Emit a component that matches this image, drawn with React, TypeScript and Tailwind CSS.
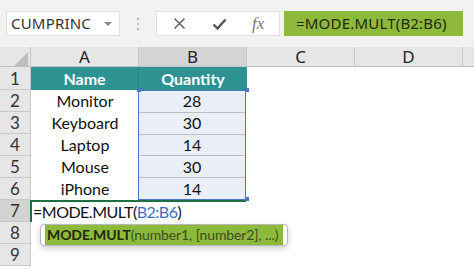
import React from "react";

const ROWS = [
  { n: 2, name: "Monitor", q: "28" },
  { n: 3, name: "Keyboard", q: "30" },
  { n: 4, name: "Laptop", q: "14" },
  { n: 5, name: "Mouse", q: "30" },
  { n: 6, name: "iPhone", q: "14" },
];

const cellFont = { fontFamily: "Lato, 'Noto Sans', sans-serif" } as React.CSSProperties;

function RowHead({ n, active }: { n: number; active?: boolean }) {
  return (
    <div
      className={`w-[31px] shrink-0 h-full flex items-center justify-center border-r border-b border-[#c8c8c8] text-[17px] leading-none text-[#333] ${
        active ? "bg-[#d2d2d2]" : "bg-[#e6e6e6]"
      }`}
      style={cellFont}
    >
      {n}
    </div>
  );
}

export default function App() {
  return (
    <div className="w-[474px] h-[269px] overflow-hidden bg-white relative" style={{ fontFamily: "'Noto Sans', 'Open Sans', sans-serif" }}>
      {/* top bar */}
      <div className="h-[47px] bg-[#f2f2f2] flex items-start pt-[11px]">
        <div className="ml-[6px] w-[114px] h-[25px] bg-white border border-[#e0e0e0] flex items-center pl-[4px] pr-[6px]">
          <span className="text-[15px] text-[#333] leading-none tracking-[0.2px]">CUMPRINC</span>
          <svg className="ml-auto" width="10" height="6" viewBox="0 0 10 6">
            <path d="M1 1 L5 5 L9 1 Z" fill="#8a8a8a" />
          </svg>
        </div>
        <div className="w-[36px] h-[25px] flex flex-col items-center justify-center gap-[3px]">
          <div className="w-[2px] h-[2px] bg-[#a8a8a8] rounded-full" />
          <div className="w-[2px] h-[2px] bg-[#a8a8a8] rounded-full" />
          <div className="w-[2px] h-[2px] bg-[#a8a8a8] rounded-full" />
        </div>
        <div className="w-[124px] h-[25px] bg-white border border-[#e0e0e0] flex items-center">
          <svg className="ml-[16px]" width="13" height="13" viewBox="0 0 13 13">
            <path d="M1.5 1.5 L11.5 11.5 M11.5 1.5 L1.5 11.5" stroke="#666" strokeWidth="1.6" />
          </svg>
          <svg className="ml-[26px]" width="15" height="12" viewBox="0 0 15 12">
            <path d="M1.5 6.5 L5.5 10.5 L13.5 1.5" stroke="#555" strokeWidth="2.4" fill="none" />
          </svg>
          <span
            className="ml-[25px] text-[17px] italic text-[#777] leading-none"
            style={{ fontFamily: "'Liberation Serif', serif" }}
          >
            fx
          </span>
        </div>
        <div className="ml-[4px] w-[179px] h-[25px] bg-[#8dba3a] flex items-center pl-[12px]">
          <span className="text-[15px] text-[#1e2a10] leading-none tracking-[0.2px]">=MODE.MULT(B2:B6)</span>
        </div>
      </div>

      {/* column header row */}
      <div className="h-[20px] flex bg-[#e6e6e6] border-b border-[#c0c0c0]">
        <div className="w-[31px] shrink-0 relative border-r border-[#c8c8c8]">
          <svg className="absolute left-[14px] top-[5px]" width="14" height="14" viewBox="0 0 14 14">
            <path d="M14 0 L14 14 L0 14 Z" fill="#bdbdbd" />
          </svg>
        </div>
        {["A", "B", "C", "D"].map((c) => (
          <div
            key={c}
            className={`w-[108px] shrink-0 flex items-center justify-center border-r border-[#c8c8c8] text-[17px] leading-none text-[#222] ${
              c === "B" ? "bg-[#d4d4d4]" : ""
            }`}
            style={{ fontFamily: "'Noto Sans', sans-serif" }}
          >
            {c}
          </div>
        ))}
        <div className="flex-1" />
      </div>

      {/* row 1 */}
      <div className="h-[23px] flex">
        <RowHead n={1} />
        <div
          className="w-[108px] shrink-0 bg-[#2f9292] flex items-center justify-center text-white font-bold text-[16px] leading-none border-r border-[#2a8080]"
          style={cellFont}
        >
          Name
        </div>
        <div
          className="w-[108px] shrink-0 bg-[#2f9292] flex items-center justify-center text-white font-bold text-[16px] leading-none"
          style={cellFont}
        >
          Quantity
        </div>
        <div className="flex-1" />
      </div>

      {/* data rows with B range highlight */}
      <div className="flex relative">
        <div className="flex flex-col">
          {ROWS.map((r) => (
            <div key={r.n} className="h-[22px] flex">
              <RowHead n={r.n} />
              <div className="w-[108px] shrink-0 flex items-center justify-center text-[16px] leading-none text-[#111]" style={cellFont}>
                {r.name}
              </div>
            </div>
          ))}
        </div>
        <div className="w-[108px] shrink-0 flex flex-col border border-[#4a78c8] bg-[#e9eef8] -ml-px h-[110px]">
          {ROWS.map((r, i) => (
            <div
              key={r.n}
              className={`flex-1 min-h-0 flex items-center justify-center text-[16px] leading-none text-[#111] ${
                i < ROWS.length - 1 ? "border-b border-[#bdbdbd]" : ""
              }`}
              style={cellFont}
            >
              {r.q}
            </div>
          ))}
        </div>
        <div className="absolute left-[137px] top-[-2px] w-[4px] h-[4px] bg-[#4a78c8]" />
        <div className="absolute left-[245px] top-[-2px] w-[4px] h-[4px] bg-[#4a78c8]" />
        <div className="absolute left-[245px] top-[107px] w-[4px] h-[4px] bg-[#4a78c8]" />
      </div>

      {/* row 7 editing */}
      <div className="h-[22px] flex">
        <RowHead n={7} active />
        <div className="w-[216px] shrink-0 flex items-center border-l-2 border-[#1f6e43] border-t-2 border-t-[#1f6e43] -ml-px">
          <span className="text-[16px] tracking-[-0.5px] text-[#111] whitespace-nowrap leading-none pl-[1px]" style={cellFont}>
            =MODE.MULT(<span className="text-[#3b6fc0]">B2:B6</span>)
          </span>
        </div>
      </div>

      {/* row 8 */}
      <div className="h-[22px] flex">
        <RowHead n={8} />
      </div>
      {/* row 9 */}
      <div className="h-[22px] flex">
        <RowHead n={9} />
      </div>

      {/* tooltip */}
      <div className="absolute left-[40px] top-[224px] w-[248px] h-[22px] bg-white border border-[#b8b8b8] rounded-[4px] shadow-[0_3px_6px_rgba(0,0,0,0.18)] flex items-center pl-[4px] pr-[4px]">
        <div className="h-[20px] flex-1 bg-[#8dba3a] flex items-center pl-[2px] whitespace-nowrap overflow-hidden" style={cellFont}>
          <span className="text-[14px] font-bold text-[#1e2a10] leading-none tracking-[-0.1px]">MODE.MULT</span>
          <span className="text-[14px] text-[#3a4a20] leading-none tracking-[-0.1px]">(number1, [number2], ...)</span>
        </div>
      </div>
    </div>
  );
}
